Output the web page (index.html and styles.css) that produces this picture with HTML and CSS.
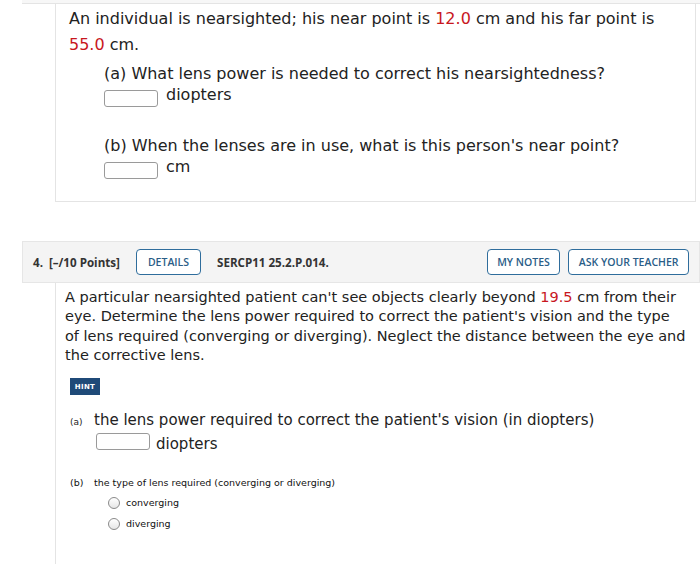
FILE: index.html
```html
<!DOCTYPE html>
<html>
<head>
<meta charset="utf-8">
<link rel="stylesheet" href="styles.css">
</head>
<body>
<div class="prevbar"></div>
<div class="panel1">
  <p class="q">An individual is nearsighted; his near point is <span class="red">12.0</span> cm and his far point is <span class="red">55.0</span> cm.</p>
  <div class="part pa">
    <div class="ptext">(a) What lens power is needed to correct his nearsightedness?</div>
    <div class="ans"><span class="box"></span><span class="unit">diopters</span></div>
  </div>
  <div class="part pb">
    <div class="ptext">(b) When the lenses are in use, what is this person's near point?</div>
    <div class="ans"><span class="box"></span><span class="unit">cm</span></div>
  </div>
</div>

<div class="header">
  <span class="num">4.</span>
  <span class="pts">[–/10 Points]</span>
  <span class="btn details">DETAILS</span>
  <span class="code">SERCP11 25.2.P.014.</span>
  <span class="spacer"></span>
  <span class="btn">MY NOTES</span>
  <span class="btn">ASK YOUR TEACHER</span>
</div>
<div class="panel2">
  <p class="q2">A particular nearsighted patient can't see objects clearly beyond <span class="red">19.5</span> cm from their eye. Determine the lens power required to correct the patient's vision and the type of lens required (converging or diverging). Neglect the distance between the eye and the corrective lens.</p>
  <div class="hint">HINT</div>
  <div class="sa">
    <span class="lbl">(a)</span><span class="satext">the lens power required to correct the patient's vision (in diopters)</span>
  </div>
  <div class="ans2"><span class="box"></span><span class="unit2">diopters</span></div>
  <div class="sb"><span class="lblb">(b)</span><span>the type of lens required (converging or diverging)</span></div>
  <div class="radios">
    <div class="radio"><span class="circle"></span><span>converging</span></div>
    <div class="radio"><span class="circle"></span><span>diverging</span></div>
  </div>
</div>
</body>
</html>
```
FILE: styles.css
```css
html, body {
  margin: 0;
  padding: 0;
  background: #fff;
}
body {
  width: 700px;
  height: 564px;
  overflow: hidden;
  font-family: "DejaVu Sans", Verdana, sans-serif;
  color: #222;
}
.red { color: #c8171e; }
.prevbar {
  margin-left: 22px;
  height: 3px;
  background: #f7f7f7;
  border-bottom: 1px solid #e4e4e4;
}
.panel1 {
  margin-left: 55px;
  width: 641px;
  height: 198px;
  box-sizing: border-box;
  border: 1px solid #e4e4e4;
  border-top: none;
  padding: 2px 0 0 13px;
}
.q {
  margin: 0;
  font-size: 16px;
  line-height: 26px;
  width: 600px;
}
.part {
  margin-left: 35px;
  font-size: 16px;
  line-height: 26px;
}
.pa { margin-top: 3px; }
.pb { margin-top: 24px; }
.ans {
  display: flex;
  align-items: center;
  height: 22px;
}
.box {
  display: inline-block;
  width: 52px;
  height: 15px;
  border: 1px solid #9a9a9a;
  border-radius: 3px;
  background: #fff;
}
.unit { margin-left: 8px; margin-top: -6px; }

.header {
  margin-top: 39px;
  margin-left: 22px;
  height: 42px;
  box-sizing: border-box;
  background: #f4f4f4;
  border: 1px solid #e6e6e6;
  display: flex;
  align-items: center;
  padding: 0 10px 0 10px;
  font-family: "Open Sans", sans-serif;
  font-weight: 700;
  font-size: 11.6px;
  color: #333;
}
.num { margin-right: 6px; }
.pts { margin-right: 16px; }
.btn {
  height: 26px;
  box-sizing: border-box;
  border: 1.5px solid #2f6d9c;
  border-radius: 4px;
  color: #2a5d87;
  font-size: 10.5px;
  font-weight: 600;
  display: flex;
  align-items: center;
  padding: 0 9.5px;
  background: #fff;
}
.details { margin-right: 16px; padding: 0 11px; }
.spacer { flex: 1; }
.btn + .btn { margin-left: 8px; }

.panel2 {
  margin-left: 55px;
  border-left: 1px solid #e4e4e4;
  height: 300px;
  padding-left: 9px;
}
.q2 {
  margin: 0;
  padding-top: 5px;
  font-size: 14.5px;
  line-height: 19.3px;
  width: 622px;
}
.hint {
  margin-top: 13px;
  margin-left: 5px;
  width: 30px;
  height: 17px;
  background: #1f4a78;
  color: #fff;
  font-size: 7px;
  font-weight: 700;
  display: flex;
  align-items: center;
  justify-content: center;
  letter-spacing: 0.3px;
}
.sa {
  margin-top: 15px;
  margin-left: 5px;
  display: flex;
  align-items: baseline;
  font-size: 15px;
  line-height: 20px;
}
.lbl { font-size: 9px; width: 24px; }
.ans2 {
  margin-left: 31px;
  margin-top: -2px;
  display: flex;
  align-items: center;
  height: 22px;
  font-size: 15px;
}
.unit2 { margin-left: 6px; margin-top: 5px; }
.sb {
  margin-top: 25px;
  margin-left: 5px;
  font-size: 9.5px;
  color: #111;
  display: flex;
}
.lblb { width: 24px; }
.radios {
  margin-left: 43px;
  margin-top: 4px;
  font-size: 9.5px;
  color: #111;
}
.radio {
  display: flex;
  align-items: center;
  height: 21px;
}
.circle {
  width: 10px;
  height: 10px;
  border: 1px solid #8a8a8a;
  border-radius: 50%;
  background: linear-gradient(#fff, #e6e6e6);
  margin-right: 6px;
}
```
